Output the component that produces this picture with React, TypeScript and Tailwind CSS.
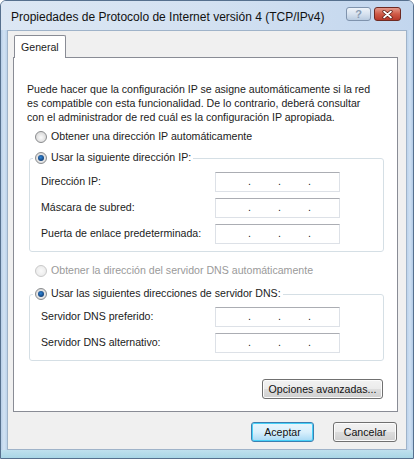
import React from "react";

const ui = "font-['Liberation_Sans',Arial,sans-serif]";

const Radio = ({ checked = false, disabled = false }: { checked?: boolean; disabled?: boolean }) => {
  if (disabled) {
    return (
      <span className="w-[12px] h-[12px] rounded-full border border-[#c9c9c9] bg-[radial-gradient(circle_at_50%_50%,#fafafa_0,#ececec_70%)] shrink-0" />
    );
  }
  return (
    <span className="w-[12px] h-[12px] rounded-full border border-[#8a8c8e] bg-[radial-gradient(circle_at_50%_55%,#fbfbfb_0,#e2e2e2_55%,#cfcfcf_100%)] flex items-center justify-center shrink-0">
      {checked && (
        <span className="w-[6px] h-[6px] rounded-full bg-[radial-gradient(circle_at_45%_40%,#2f86d8_0,#1a4f8c_55%,#0c2f5c_100%)]" />
      )}
    </span>
  );
};

const IpBox = () => (
  <div className="w-[125px] h-[20px] bg-white border border-[#dde1e7] border-t-[#abadb3] flex items-end pb-[4px] pl-[32px] gap-[27px] text-[#222] leading-none">
    <span>.</span>
    <span>.</span>
    <span>.</span>
  </div>
);

const Field = ({ label }: { label: string }) => (
  <div className="h-[20px] flex items-center">
    <span className="w-[174px] shrink-0">{label}</span>
    <IpBox />
  </div>
);

const Group = ({ legend, top, children }: { legend: string; top: string; children: React.ReactNode }) => (
  <fieldset className="ml-[2px] w-[355px] border border-[#d5dfe5] rounded-[3px]">
    <legend className="ml-[3px] px-[2px] h-[16px] flex items-center gap-[4px]">
      <Radio checked />
      <span>{legend}</span>
    </legend>
    <div className={`${top} pb-[7px] pl-[11px] flex flex-col gap-[6px]`}>{children}</div>
  </fieldset>
);

const Button = ({ children, primary = false, width }: { children: React.ReactNode; primary?: boolean; width: string }) => (
  <button
    type="button"
    className={
      primary
        ? `${width} h-[20px] rounded-[3px] border border-[#3c7fb1] shadow-[inset_0_0_0_1px_#48d1f8] bg-gradient-to-b from-[#eaf6fd] via-[#d9f0fc] to-[#a7d9f5] text-[#111] leading-none`
        : `${width} h-[20px] rounded-[3px] border border-[#707070] shadow-[inset_0_0_0_1px_#fcfcfc] bg-[linear-gradient(to_bottom,#f2f2f2_0%,#ebebeb_50%,#dddddd_51%,#cfcfcf_100%)] text-[#111] leading-none`
    }
  >
    {children}
  </button>
);

export default function App() {
  return (
    <div
      className={`${ui} w-[414px] h-[459px] border border-[#56708e] rounded-t-[6px] bg-gradient-to-b from-[#e1ebf6] via-[#c6daf0] to-[#b0d9ea] flex flex-col text-[10.6px] text-[#1b1b1b] overflow-hidden`}
    >
      {/* title bar */}
      <div className="h-[29px] shrink-0 flex items-start pl-[10px] pr-[12px] bg-gradient-to-r from-[#dce7f4] via-[#d3e1f1] to-[#c2d6ee]">
        <span className="text-[12px] text-[#111] mt-[7px] whitespace-nowrap">
          Propiedades de Protocolo de Internet versión 4 (TCP/IPv4)
        </span>
        <div className="ml-auto mt-[6px] flex gap-[3px]">
          <div className="w-[25px] h-[14px] rounded-[3px] border border-[#7f93ad] bg-gradient-to-b from-[#eef3f9] via-[#d7e2ef] to-[#b9cbe0] flex items-center justify-center text-[11px] font-bold text-[#8a9cb3] leading-none">
            ?
          </div>
          <div className="w-[27px] h-[14px] rounded-[3px] border border-[#6e2a22] bg-gradient-to-b from-[#e49a8c] via-[#cf5a47] to-[#b7382a] flex items-center justify-center">
            <svg width="11" height="9" viewBox="0 0 11 9">
              <path d="M2 1.5 L9 7.5 M9 1.5 L2 7.5" stroke="#5a1a12" strokeWidth="3.2" strokeLinecap="round" />
              <path d="M2 1.5 L9 7.5 M9 1.5 L2 7.5" stroke="#ffffff" strokeWidth="1.7" strokeLinecap="round" />
            </svg>
          </div>
        </div>
      </div>

      {/* frame + client */}
      <div className="flex h-[420px] shrink-0">
        <div className="w-[6px] bg-gradient-to-r from-[#b8cfe9] via-[#d2e2f3] to-[#bcd3ec]" />
        <div className="w-[400px] border border-[#9fb3c9] bg-[#f0f0f0] pt-[4px] pl-[5px] pr-[8px] flex flex-col">
          {/* tab */}
          <div className="relative z-10 -mb-px ml-[1px] w-[52px] h-[23px] bg-white border border-b-0 border-[#898c95] rounded-t-[2px] pl-[6px] pt-[4px]">
            General
          </div>
          {/* panel */}
          <div className="h-[355px] bg-white border border-[#898c95] pt-[24px] pl-[13px] flex flex-col">
            <p className="leading-[14px] whitespace-nowrap">
              Puede hacer que la configuración IP se asigne automáticamente si la red
              <br />
              es compatible con esta funcionalidad. De lo contrario, deberá consultar
              <br />
              con el administrador de red cuál es la configuración IP apropiada.
            </p>

            <div className="mt-[5px] ml-[8px] h-[16px] flex items-center gap-[4px]">
              <Radio />
              <span>Obtener una dirección IP automáticamente</span>
            </div>

            <div className="mt-[5px]">
              <Group legend="Usar la siguiente dirección IP:" top="pt-[6px]">
                <Field label="Dirección IP:" />
                <Field label="Máscara de subred:" />
                <Field label="Puerta de enlace predeterminada:" />
              </Group>
            </div>

            <div className="mt-[11px] ml-[8px] h-[16px] flex items-center gap-[4px] text-[#9a9a9a]">
              <Radio disabled />
              <span>Obtener la dirección del servidor DNS automáticamente</span>
            </div>

            <div className="mt-[7px]">
              <Group legend="Usar las siguientes direcciones de servidor DNS:" top="pt-[5px]">
                <Field label="Servidor DNS preferido:" />
                <Field label="Servidor DNS alternativo:" />
              </Group>
            </div>

            <div className="mt-[18px] flex justify-end pr-[14px]">
              <Button width="w-[121px]">Opciones avanzadas...</Button>
            </div>
          </div>

          {/* dialog buttons */}
          <div className="mt-[10px] flex justify-end gap-[19px] pr-[1px]">
            <Button primary width="w-[63px]">
              Aceptar
            </Button>
            <Button width="w-[64px]">Cancelar</Button>
          </div>
        </div>
        <div className="w-[6px] bg-gradient-to-r from-[#bcd3ec] via-[#cfe0f2] to-[#b3cbe6]" />
      </div>

      {/* bottom frame */}
      <div className="flex-1 bg-gradient-to-b from-[#bfe0ee] to-[#a9d6e6]" />
    </div>
  );
}
